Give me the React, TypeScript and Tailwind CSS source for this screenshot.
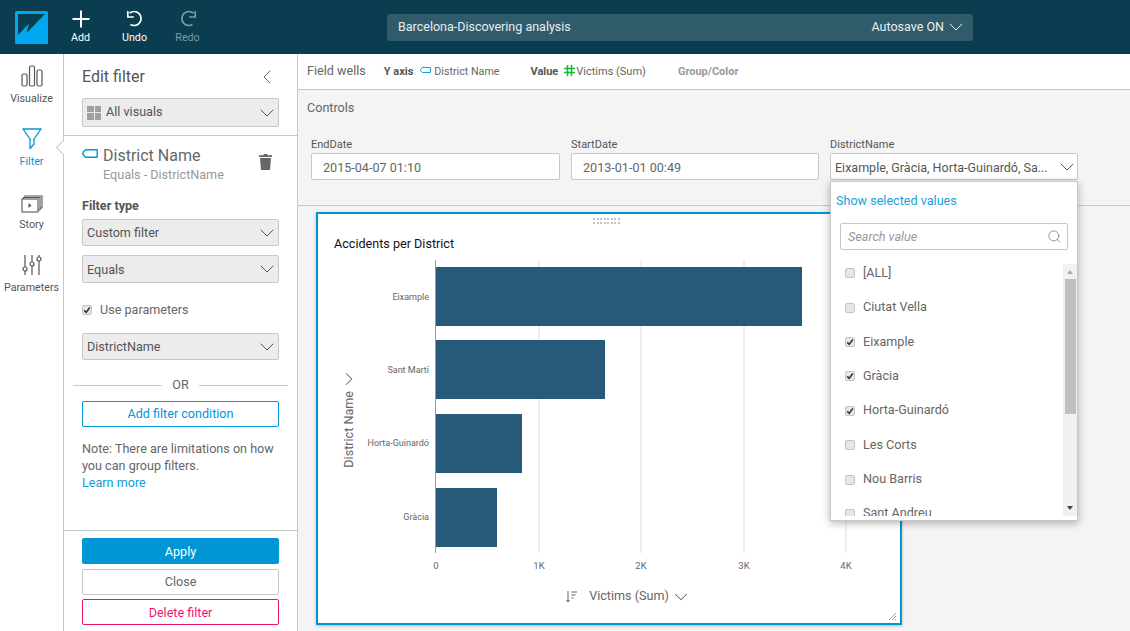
import { ChevronDown, ChevronLeft, ChevronRight, Search } from "lucide-react";

const TagIcon = ({ className }: { className?: string }) => (
  <svg className={className} viewBox="0 0 16 9" fill="none" stroke="#0096d6" strokeWidth="1.4">
    <path d="M3.5 .8H15.2V8.2H3.5L.9 5.6V3.4Z" strokeLinejoin="round" />
  </svg>
);

const Caret = () => <ChevronDown className="mr-[-2px] shrink-0 text-[#555]" size={24} strokeWidth={1} />;

const Select = ({ label, icon, h = "h-[28px]" }: { label: string; icon?: boolean; h?: string }) => (
  <div className={"flex items-center rounded-[2px] border border-[#c8c8c8] bg-[#ececec] pl-[4px] pr-[1px] text-[12.6px] text-[#555] " + h}>
    {icon && (
      <span className="mr-[5px] grid h-[14px] w-[14px] grid-cols-2 gap-[1px]">
        <i className="bg-[#a0a0a0]" />
        <i className="bg-[#a0a0a0]" />
        <i className="bg-[#a0a0a0]" />
        <i className="bg-[#a0a0a0]" />
      </span>
    )}
    <span className={"flex-1 " + (icon ? "" : "pt-[2px]")}>{label}</span>
    <Caret />
  </div>
);

const Check = ({ on }: { on?: boolean }) => (
  <span className="flex h-[10px] w-[10px] shrink-0 items-center justify-center rounded-[2px] border border-[#c4c4c4] bg-[#e6e6e6]">
    {on && (
      <svg viewBox="0 0 10 10" className="h-[8px] w-[8px]" fill="none" stroke="#333" strokeWidth="2">
        <path d="M1.5 5.5 4 8 8.5 2" />
      </svg>
    )}
  </span>
);

const RailItem = ({ label, icon, active }: { label: string; icon: React.ReactNode; active?: boolean }) => (
  <div className={"flex flex-col items-center " + (active ? "text-[#0096d6]" : "text-[#555]")}>
    <div className="flex h-[24px] items-end">{icon}</div>
    <span className="mt-[5px] text-[10.7px] leading-[14px]">{label}</span>
  </div>
);

const DateField = ({ label, value, w }: { label: string; value: string; w: string }) => (
  <div className={w}>
    <div className="text-[11px] leading-[16px] text-[#555]">{label}</div>
    <div className="flex h-[27px] items-center rounded-[2px] border border-[#c8c8c8] bg-white pl-[11px] pt-[3px] text-[12.6px] text-[#666]">
      {value}
    </div>
  </div>
);

const bars = [
  { name: "Eixample", y: 267, w: 366, ly: 300 },
  { name: "Sant Martí", y: 340, w: 169, ly: 373 },
  { name: "Horta-Guinardó", y: 414, w: 86, ly: 446 },
  { name: "Gràcia", y: 488, w: 61, ly: 520 },
];

const ticks = [
  { label: "0", x: 436 },
  { label: "1K", x: 539 },
  { label: "2K", x: 641 },
  { label: "3K", x: 744 },
  { label: "4K", x: 846 },
];

const values = [
  { name: "[ALL]" },
  { name: "Ciutat Vella" },
  { name: "Eixample", on: true },
  { name: "Gràcia", on: true },
  { name: "Horta-Guinardó", on: true },
  { name: "Les Corts" },
  { name: "Nou Barris" },
  { name: "Sant Andreu" },
];

const Chart = () => (
  // viewBox uses page coordinates so the numbers can be read off the screenshot
  <svg className="block h-[320px] w-[520px]" viewBox="360 256 520 320">
    {ticks.slice(1).map((t) => (
      <line key={t.x} x1={t.x} x2={t.x} y1="260" y2="553" stroke="#dcdcdc" />
    ))}
    <line x1="435.5" x2="435.5" y1="260" y2="553" stroke="#9a9a9a" />
    {bars.map((b) => (
      <g key={b.name}>
        <rect x="436" y={b.y} width={b.w} height="59" fill="#265a78" />
        <text x="429" y={b.ly} textAnchor="end" fontSize="9" fill="#666">
          {b.name}
        </text>
      </g>
    ))}
    {ticks.map((t) => (
      <text key={t.x} x={t.x} y="569" textAnchor="middle" fontSize="9.5" fill="#666">
        {t.label}
      </text>
    ))}
  </svg>
);

export default function App() {
  return (
    <div className="relative flex h-[631px] w-[1130px] flex-col overflow-hidden bg-white font-['Roboto',sans-serif]">
      {/* Top bar */}
      <header className="flex h-[54px] shrink-0 items-center bg-[#0a3d4f] pl-[15px] text-white">
        <svg className="h-[33px] w-[33px] shrink-0" viewBox="0 0 33 33">
          <rect width="33" height="33" rx="1.5" fill="#00a8f0" />
          <path d="M3 24 14 12.5 11.5 22 30 3H3Z" fill="#0a3d4f" />
        </svg>
        <div className="ml-[9px] flex w-[47px] flex-col items-center">
          <svg className="h-[18px] w-[18px]" viewBox="0 0 18 18" stroke="#fff" strokeWidth="2" fill="none">
            <path d="M9 .5V17.5M.5 9H17.5" />
          </svg>
          <span className="mt-[3px] text-[10.7px] leading-[14px]">Add</span>
        </div>
        <div className="ml-[7px] flex w-[47px] flex-col items-center">
          <svg className="h-[18px] w-[18px]" viewBox="0 0 18 18" stroke="#fff" strokeWidth="1.7" fill="none">
            <path d="M3.5 3.2A7 7 0 1 1 4.5 14.5M1.8 1V7H7.8" />
          </svg>
          <span className="mt-[3px] text-[10.7px] leading-[14px]">Undo</span>
        </div>
        <div className="ml-[6px] flex w-[47px] flex-col items-center text-[#7f9aa3]">
          <svg className="h-[18px] w-[18px]" viewBox="0 0 18 18" stroke="#7f9aa3" strokeWidth="1.7" fill="none">
            <path d="M14.5 3.2A7 7 0 1 0 13.5 14.5M16.2 1V7H10.2" />
          </svg>
          <span className="mt-[3px] text-[10.7px] leading-[14px]">Redo</span>
        </div>
        <div className="ml-[176px] flex h-[27px] w-[586px] items-center rounded-[2px] bg-[#2f5b6b] pl-[11px] pr-[5px] text-[12.5px] text-[#e8eef0]">
          <span className="flex-1">Barcelona-Discovering analysis</span>
          <span>Autosave ON</span>
          <ChevronDown size={24} strokeWidth={1} />
        </div>
      </header>

      <div className="flex min-h-0 flex-1">
        {/* Icon rail */}
        <nav className="relative flex w-[64px] shrink-0 flex-col gap-[20px] border-r border-[#c8c8c8] pt-[9px]">
          <RailItem
            label="Visualize"
            icon={
              <svg className="h-[22px] w-[22px]" viewBox="0 0 22 22" fill="none" stroke="#555" strokeWidth="1.2">
                <rect x="1" y="9" width="5" height="12" rx="1.5" />
                <rect x="8.5" y="1" width="5" height="20" rx="1.5" />
                <rect x="16" y="5" width="5" height="16" rx="1.5" />
              </svg>
            }
          />
          <RailItem
            active
            label="Filter"
            icon={
              <svg className="h-[22px] w-[20px]" viewBox="0 0 20 22" fill="none" stroke="#0096d6" strokeWidth="1.3">
                <path d="M1 1H19L12 11V16L8 20.5V11Z" strokeLinejoin="round" />
              </svg>
            }
          />
          <RailItem
            label="Story"
            icon={
              <svg className="h-[18px] w-[22px]" viewBox="0 0 22 18" fill="none" stroke="#555" strokeWidth="1.1">
                <path d="M4 3V1H21V13H19" />
                <path d="M2.5 4V2.5H19V15H17" />
                <rect x="1" y="4" width="16" height="13" />
                <path d="M7.5 8 10.5 10.5 7.5 13Z" fill="#555" stroke="none" />
              </svg>
            }
          />
          <RailItem
            label="Parameters"
            icon={
              <svg className="h-[22px] w-[20px]" viewBox="0 0 20 22" fill="none" stroke="#555" strokeWidth="1.2">
                <path d="M3 1V13M3 17V21M10 1V8M10 12V21M17 1V3M17 7V21" />
                <circle cx="3" cy="15" r="2" />
                <circle cx="10" cy="10" r="2" />
                <circle cx="17" cy="5" r="2" />
              </svg>
            }
          />
          {/* Notch pointing at the active item */}
          <span className="absolute right-[-6px] top-[88px] z-10 h-[11px] w-[11px] rotate-45 border-b border-l border-[#c8c8c8] bg-white" />
        </nav>

        {/* Edit filter panel */}
        <aside className="flex w-[234px] shrink-0 flex-col border-r border-[#c8c8c8]">
          <div className="border-b border-[#c8c8c8] px-[18px] pb-[8px] pt-[12px]">
            <div className="flex h-[22px] items-center justify-between text-[16px] text-[#555]">
              <span>Edit filter</span>
              <ChevronLeft className="text-[#666]" size={24} strokeWidth={1} />
            </div>
            <div className="mt-[10px] w-[197px]">
              <Select label="All visuals" icon h="h-[29px]" />
            </div>
          </div>

          <div className="flex-1 px-[18px]">
            <div className="flex pt-[12px]">
              <TagIcon className="mt-[1px] h-[9px] w-[16px] shrink-0" />
              <div className="ml-[5px] flex-1">
                <div className="text-[16px] leading-[16px] text-[#666]">District Name</div>
                <div className="mt-[3px] text-[12.6px] leading-[16px] text-[#999]">Equals - DistrictName</div>
              </div>
              <svg className="mr-[7px] mt-[5px] h-[17px] w-[13px]" viewBox="0 0 13 17" fill="#666">
                <path d="M0 2.2H4.3L5 1H8L8.7 2.2H13V4H0ZM1 5H12L11 17H2Z" />
              </svg>
            </div>
            <div className="mt-[15px] text-[12.6px] font-bold leading-[16px] text-[#555]">Filter type</div>
            <div className="mt-[5px] flex w-[197px] flex-col gap-[9px]">
              <Select label="Custom filter" h="h-[27px]" />
              <Select label="Equals" />
            </div>
            <div className="mt-[19px] flex items-center text-[12.6px] leading-[16px] text-[#666]">
              <Check on />
              <span className="ml-[8px]">Use parameters</span>
            </div>
            <div className="mt-[15px] w-[197px]">
              <Select label="DistrictName" h="h-[27px]" />
            </div>
            <div className="-mx-[9px] mt-[17px] flex items-center gap-[10px] text-[12.6px] leading-[16px] text-[#666]">
              <span className="h-px flex-1 bg-[#c8c8c8]" />
              OR
              <span className="h-px flex-1 bg-[#c8c8c8]" />
            </div>
            <div className="mt-[8px] flex h-[26px] w-[197px] items-center justify-center rounded-[2px] border border-[#0096d6] text-[12.6px] text-[#0096d6]">
              Add filter condition
            </div>
            <p className="mt-[13px] w-[197px] text-[12.6px] leading-[17px] text-[#666]">
              Note: There are limitations on how you can group filters.
              <br />
              <span className="text-[#0f9ddb]">Learn more</span>
            </p>
          </div>

          <div className="flex flex-col gap-[4px] border-t border-[#c8c8c8] px-[18px] pb-[6px] pt-[7px]">
            <div className="flex h-[26px] items-center justify-center rounded-[2px] bg-[#0096d6] pt-[2px] text-[12.6px] text-white">Apply</div>
            <div className="mt-[1px] flex h-[26px] items-center justify-center rounded-[2px] border border-[#c8c8c8] text-[12.6px] text-[#666]">Close</div>
            <div className="flex h-[26px] items-center justify-center rounded-[2px] border border-[#f0136e] pt-[2px] text-[12.6px] text-[#f0136e]">Delete filter</div>
          </div>
        </aside>

        {/* Main area */}
        <main className="flex min-w-0 flex-1 flex-col bg-[#f4f4f4]">
          <div className="flex h-[36px] shrink-0 items-center border-b border-[#c8c8c8] bg-white pl-[9px] pt-[1px] text-[11px] text-[#666]">
            <span className="mt-[-1px] text-[12.6px]">Field wells</span>
            <b className="ml-[18px] text-[#555]">Y axis</b>
            <TagIcon className="ml-[7px] mt-[-4px] h-[8px] w-[11px]" />
            <span className="ml-[3px] text-[10.7px]">District Name</span>
            <b className="ml-[31px] text-[#555]">Value</b>
            <svg className="ml-[6px] mt-[-4px] h-[11px] w-[11px]" viewBox="0 0 11 11" stroke="#1fb52f" strokeWidth="1.6">
              <path d="M3.5 0V11M7.5 0V11M0 3.5H11M0 7.5H11" />
            </svg>
            <span className="ml-[1px]">Victims (Sum)</span>
            <b className="ml-[32px] text-[#999]">Group/Color</b>
          </div>

          <div className="h-[116px] shrink-0 border-b border-[#c8c8c8] pl-[9px] pt-[10px]">
            <div className="text-[12.6px] leading-[16px] text-[#666]">Controls</div>
            <div className="ml-[4px] mt-[21px] flex gap-[11px]">
              <DateField w="w-[249px]" label="EndDate" value="2015-04-07 01:10" />
              <DateField w="w-[248px]" label="StartDate" value="2013-01-01 00:49" />
              <div className="w-[248px]">
                <div className="text-[11px] leading-[16px] text-[#555]">DistrictName</div>
                <div className="flex h-[27px] items-center rounded-[2px] border border-[#c8c8c8] bg-white pl-[4px] text-[12.5px] text-[#555]">
                  <span className="flex-1 truncate pt-[3px]">Eixample, Gràcia, Horta-Guinardó, Sa...</span>
                  <Caret />
                </div>
              </div>
            </div>
          </div>

          {/* Visual card */}
          <section className="ml-[18px] mt-[6px] flex h-[413px] w-[586px] shrink-0 flex-col border-2 border-[#0096d6] bg-white shadow-[0_1px_3px_rgba(0,0,0,0.25)]">
            <div className="ml-[275px] mt-[4px] grid w-fit grid-cols-8 gap-[1.5px]">
              {Array.from({ length: 16 }).map((_, i) => (
                <i key={i} className="h-[2px] w-[2px] bg-[#c4c4c4]" />
              ))}
            </div>
            <div className="ml-[16px] mt-[12px] h-[16px] text-[12.6px] leading-[16px] text-[#111]">Accidents per District</div>
            <div className="mt-[4px] flex">
              <div className="w-[42px] pl-[20px]">
                <div className="mt-[112px] flex w-[22px] flex-col items-center text-[#666]">
                  <ChevronRight size={22} strokeWidth={1.1} className="shrink-0" />
                  <span className="mt-[1px] rotate-180 whitespace-nowrap text-[12.6px] leading-[14px] [writing-mode:vertical-rl]">District Name</span>
                </div>
              </div>
              <Chart />
            </div>
            <div className="mt-[10px] flex h-[22px] items-center justify-center pl-[40px] text-[12.6px] text-[#666]">
              <svg className="mr-[11px] h-[12px] w-[12px]" viewBox="0 0 12 12" fill="none" stroke="#666">
                <path d="M2 0V11M.3 9 2 11 3.7 9M5.5 1H11M5.5 4H9.5M5.5 7H7.5" />
              </svg>
              Victims (Sum)
              <ChevronDown className="ml-[1px]" size={22} strokeWidth={1.1} />
            </div>
          </section>
        </main>
      </div>

      {/* Open DistrictName dropdown */}
      <div className="absolute left-[830px] top-[181px] z-20 flex h-[340px] w-[248px] flex-col border border-[#c8c8c8] bg-white shadow-[0_2px_8px_rgba(0,0,0,0.3)]">
        <div className="pl-[5px] pt-[11px] text-[12.6px] leading-[16px] text-[#1a9fdc]">Show selected values</div>
        <div className="ml-[9px] mt-[14px] flex h-[27px] w-[228px] items-center justify-between rounded-[2px] border border-[#c8c8c8] pl-[7px] pr-[5px] pt-[2px] text-[12.6px] italic text-[#999]">
          Search value
          <Search size={15} strokeWidth={1.2} className="mt-[-3px] text-[#777]" />
        </div>
        <div className="mb-[4px] mt-[6px] flex min-h-0 flex-1">
          <ul className="min-w-0 flex-1 overflow-hidden pl-[14px]">
            {values.map((v) => (
              <li key={v.name} className="flex h-[34.4px] items-center gap-[8px] text-[12.6px] text-[#666]">
                <Check on={v.on} />
                {v.name}
              </li>
            ))}
          </ul>
          <div className="mt-[8px] flex w-[14px] flex-col items-center bg-[#f1f1f1] pt-[6px]">
            <span className="h-0 w-0 border-x-[3.5px] border-b-[4px] border-x-transparent border-b-[#aaa]" />
            <span className="ml-[1px] mt-[5px] h-[135px] w-[11px] bg-[#bfbfbf]" />
            <span className="mb-[6px] mt-auto h-0 w-0 border-x-[3.5px] border-t-[4px] border-x-transparent border-t-[#444]" />
          </div>
        </div>
      </div>

      {/* Resize grip */}
      <svg className="absolute left-[888px] top-[612px] h-[9px] w-[9px]" viewBox="0 0 9 9" stroke="#aaa">
        <path d="M1 8 8 1M4 8 8 4M7 8 8 7" />
      </svg>
    </div>
  );
}
